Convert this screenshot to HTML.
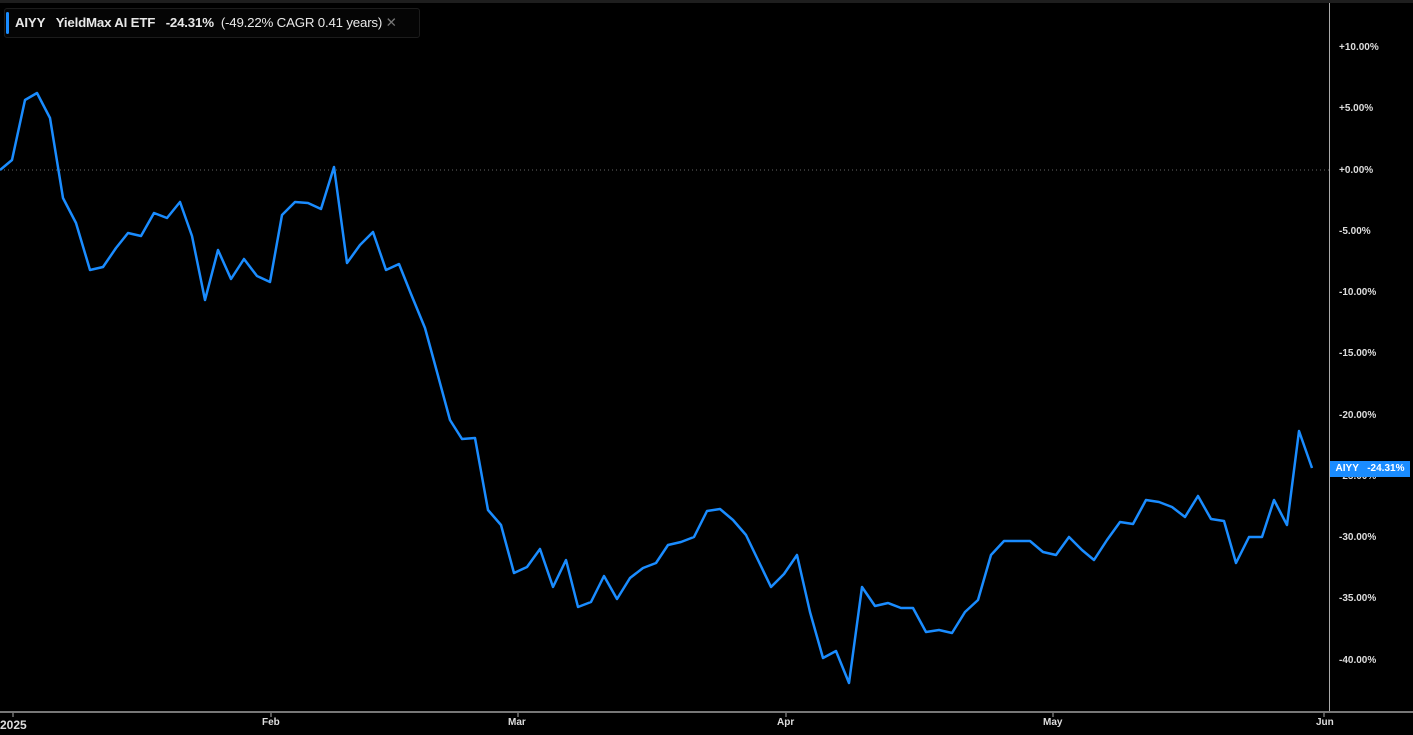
<!DOCTYPE html><html><head><style>
body{margin:0;width:1413px;height:735px;background:#000;overflow:hidden;font-family:"Liberation Sans",sans-serif;position:relative}
.top{position:absolute;left:0;top:0;width:1413px;height:3px;background:#1e1e1e}
.leg{position:absolute;left:4px;top:8px;width:414px;height:28px;border:1px solid #1c1c1c;border-radius:3px;background:#050505}
.leg .bar{position:absolute;left:1px;top:3px;width:3px;height:22px;background:#1a8cff;border-radius:2px}
.leg .t{position:absolute;left:10px;top:6px;font-size:13.3px;color:#e8e8e8;white-space:nowrap;letter-spacing:-0.2px}
.leg b{font-weight:bold}
.yl{position:absolute;left:1339px;font-size:10px;color:#ddd;font-weight:bold}
.xl{position:absolute;top:717px;font-size:10px;color:#ddd;font-weight:bold}
.tag{position:absolute;left:1330px;top:461px;width:80px;height:16px;background:#1a8cff;color:#fff;font-size:10px;line-height:16px;font-weight:bold}
</style></head><body>
<div class="top"></div>
<svg width="1413" height="735" style="position:absolute;left:0;top:0">
<line x1="0" y1="170" x2="1329" y2="170" stroke="#666" stroke-dasharray="1,3"/>
<line x1="1329.5" y1="3" x2="1329.5" y2="712" stroke="#aaa"/>
<line x1="0" y1="712" x2="1413" y2="712" stroke="#777" stroke-width="2"/>
<g stroke="#aaa"><line x1="13" y1="713" x2="13" y2="717"/><line x1="271" y1="713" x2="271" y2="717"/><line x1="518" y1="713" x2="518" y2="717"/><line x1="786" y1="713" x2="786" y2="717"/><line x1="1053" y1="713" x2="1053" y2="717"/><line x1="1324" y1="713" x2="1324" y2="717"/></g>
<polyline fill="none" stroke="#1a8cff" stroke-width="2.5" stroke-linejoin="round" points="0,170 12,160 25,100 37,93 50,118 63,198 76,223 90,270 103,267 116,248 128,233 141,236 154,213 167,218 180,202 192,236 205,300 218,250 231,279 244,259 257,276 270,282 282,215 295,202 308,203 321,209 334,167 347,263 360,245 373,232 386,270 399,264 411,294 425,328 437,372 450,420 462,439 475,438 488,510 501,525 514,573 527,567 540,549 553,587 566,560 578,607 591,602 604,576 617,599 630,578 643,568 656,563 668,545 681,542 694,537 707,511 720,509 733,520 746,535 758,560 771,587 784,574 797,555 810,612 823,658 836,651 849,683 862,587 875,606 888,603 901,608 913,608 926,632 939,630 952,633 965,612 978,600 991,555 1004,541 1017,541 1030,541 1043,552 1056,555 1069,537 1082,550 1094,560 1107,540 1120,522 1133,524 1146,500 1159,502 1172,507 1185,517 1198,496 1211,519 1224,521 1236,563 1249,537 1262,537 1274,500 1287,525 1299,431 1312,468"/>
</svg>
<div class="leg"><div class="bar"></div><div class="t"><b>AIYY</b>&nbsp;&nbsp; <b>YieldMax AI ETF</b>&nbsp;&nbsp; <b>-24.31%</b>&nbsp;&nbsp;(-49.22% CAGR 0.41 years) <span style="color:#777">✕</span></div></div>
<div class="yl" style="top:42px">+10.00%</div>
<div class="yl" style="top:103px">+5.00%</div>
<div class="yl" style="top:165px">+0.00%</div>
<div class="yl" style="top:226px">-5.00%</div>
<div class="yl" style="top:287px">-10.00%</div>
<div class="yl" style="top:348px">-15.00%</div>
<div class="yl" style="top:410px">-20.00%</div>
<div class="yl" style="top:471px">-25.00%</div>
<div class="yl" style="top:532px">-30.00%</div>
<div class="yl" style="top:593px">-35.00%</div>
<div class="yl" style="top:655px">-40.00%</div>
<div class="tag">&nbsp;&nbsp;AIYY&nbsp;&nbsp; -24.31%</div>
<div class="xl" style="left:0;font-size:12px;top:718px">2025</div>
<div class="xl" style="left:262px">Feb</div>
<div class="xl" style="left:508px">Mar</div>
<div class="xl" style="left:777px">Apr</div>
<div class="xl" style="left:1043px">May</div>
<div class="xl" style="left:1316px">Jun</div>
</body></html>
